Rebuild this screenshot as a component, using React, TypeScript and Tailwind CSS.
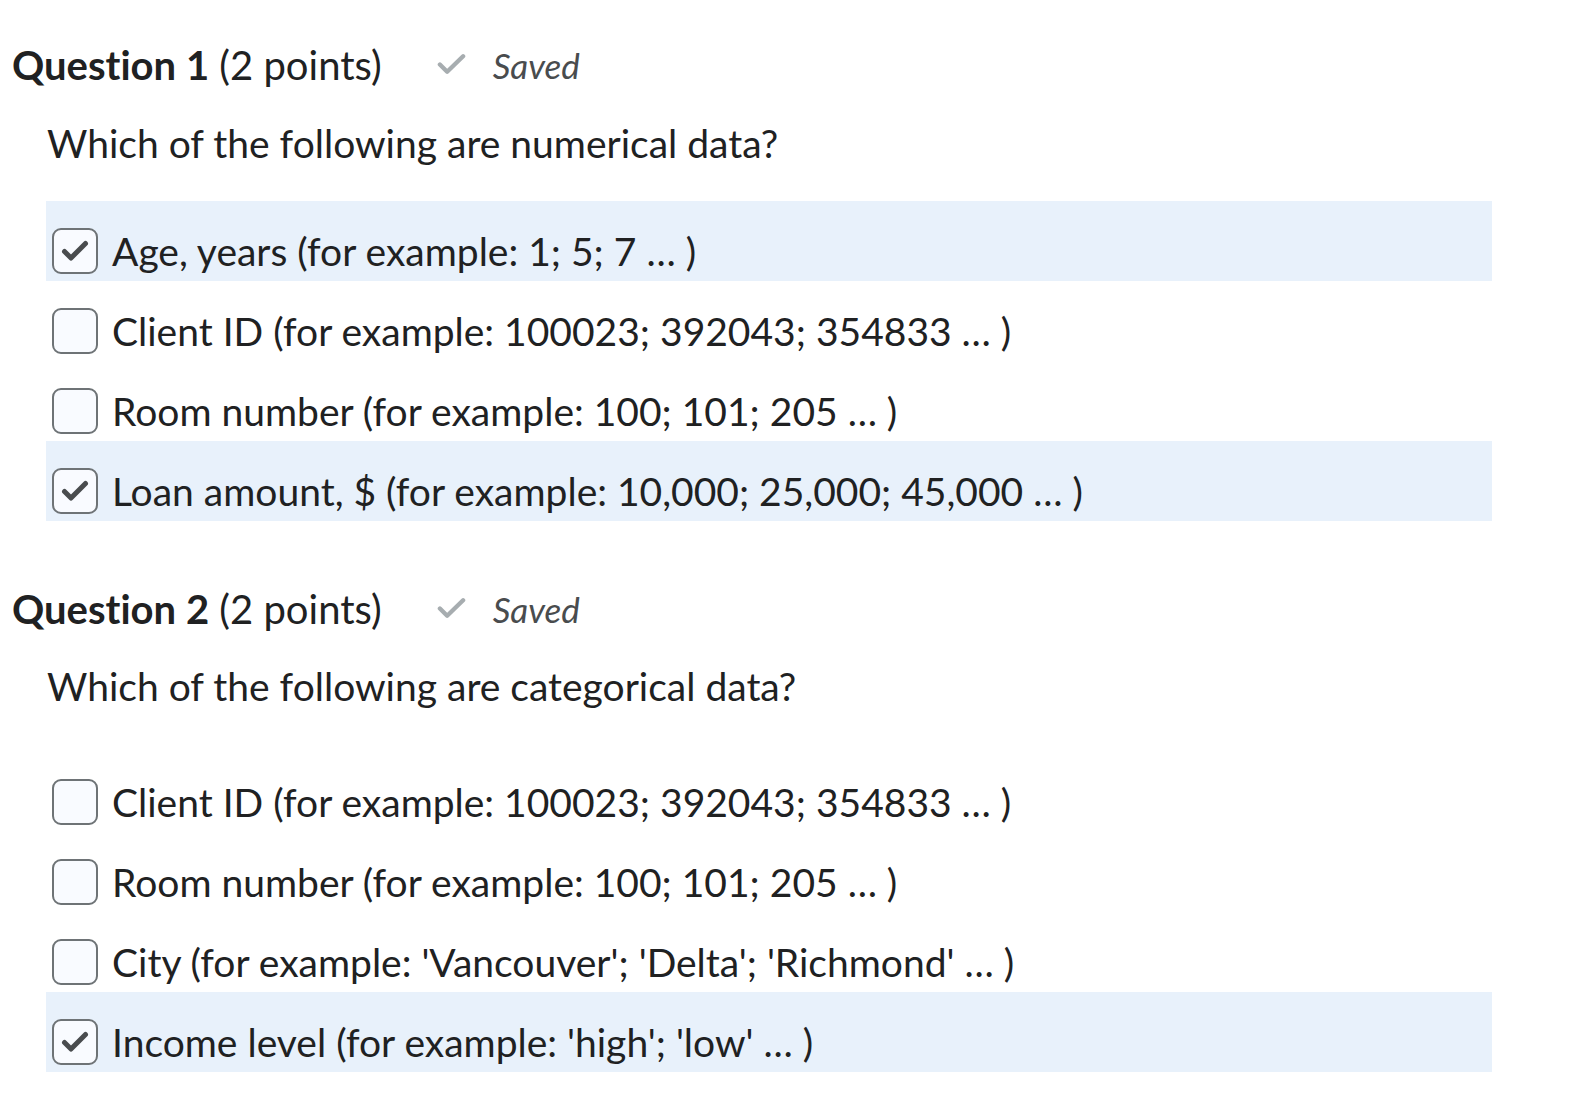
import React from 'react';

interface Option {
    label: string;
    checked: boolean;
}

interface Question {
    number: number;
    points: number;
    prompt: string;
    options: Option[];
}

const questions: Question[] = [
    {
        number: 1,
        points: 2,
        prompt: 'Which of the following are numerical data?',
        options: [
            { label: 'Age, years (for example: 1; 5; 7 … )', checked: true },
            { label: 'Client ID (for example: 100023; 392043; 354833 … )', checked: false },
            { label: 'Room number (for example: 100; 101; 205 … )', checked: false },
            { label: 'Loan amount, $ (for example: 10,000; 25,000; 45,000 … )', checked: true },
        ],
    },
    {
        number: 2,
        points: 2,
        prompt: 'Which of the following are categorical data?',
        options: [
            { label: 'Client ID (for example: 100023; 392043; 354833 … )', checked: false },
            { label: 'Room number (for example: 100; 101; 205 … )', checked: false },
            { label: "City (for example: 'Vancouver'; 'Delta'; 'Richmond' … )", checked: false },
            { label: "Income level (for example: 'high'; 'low' … )", checked: true },
        ],
    },
];

const Checkbox: React.FC<{ checked: boolean }> = ({ checked }) => (
    <span className="w-[46px] h-[46px] shrink-0 rounded-[9px] border-2 border-[#6e7376] bg-[#f9fbff] flex items-center justify-center">
        {checked && (
            <svg viewBox="0 0 28 22" className="w-[28px] h-[22px]">
                <path d="M3.5 11.5l6.5 6.5L24.5 3.5" fill="none" stroke="#494c4e" strokeWidth="5" strokeLinecap="round" strokeLinejoin="round" />
            </svg>
        )}
    </span>
);

const QuestionBlock: React.FC<{ q: Question; first: boolean }> = ({ q, first }) => (
    <section className={first ? '' : 'mt-[63px]'}>
        {/* heading with saved status */}
        <div className="flex items-center h-[50px] pl-[12px]">
            <h2 className="text-[40px] text-[#202122] leading-none">
                <span className="font-bold">Question {q.number}</span> ({q.points} points)
            </h2>
            <svg viewBox="0 0 30 22" className="w-[29px] h-[22px] ml-[55px] mt-[-2px]">
                <path d="M3 11.5l7.5 7.5L27 3" fill="none" stroke="#a7adb0" strokeWidth="4.5" strokeLinecap="round" strokeLinejoin="round" />
            </svg>
            <span className="ml-[27px] italic text-[35px] text-[#494c4e]">Saved</span>
        </div>
        <p className={`pl-[47px] text-[39px] leading-[50px] text-[#202122] ${first ? 'mt-[28px]' : 'mt-[27px]'}`}>{q.prompt}</p>
        <ul className={first ? 'mt-[33px]' : 'mt-[41px]'}>
            {q.options.map(opt => (
                <li key={opt.label} className={`ml-[46px] w-[1446px] h-[80px] flex items-start pt-[27px] pl-[6px] ${opt.checked ? 'bg-[#e8f1fb]' : ''}`}>
                    <Checkbox checked={opt.checked} />
                    <span className="ml-[14px] text-[39px] leading-[46px] text-[#202122] whitespace-nowrap">{opt.label}</span>
                </li>
            ))}
        </ul>
    </section>
);

export default function App() {
    return (
        <div className="min-h-[1097px] bg-white pt-[40px] [font-variant-ligatures:none]" style={{ fontFamily: 'Lato, "Liberation Sans", sans-serif' }}>
            {questions.map((q, i) => (
                <QuestionBlock key={q.number} q={q} first={i === 0} />
            ))}
        </div>
    );
}
